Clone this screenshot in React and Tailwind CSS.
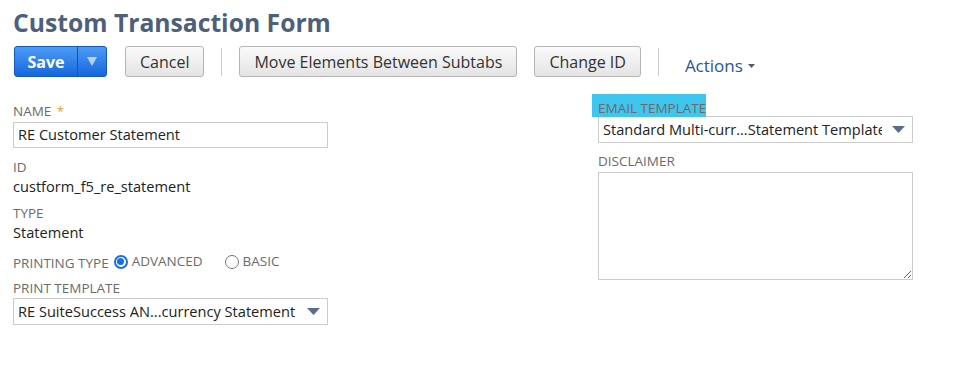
import React from "react";

const btn =
  "h-[31px] rounded-[3px] border border-[#b5b5b5] bg-gradient-to-b from-[#fafafa] to-[#e4e4e4] px-[14px] text-[16px] text-[#333333] leading-none";

const Label = ({ children }) => (
  <div className="text-[13.5px] leading-[18px] uppercase text-[#6b6b6b]">{children}</div>
);

const Triangle = ({ className }) => (
  <svg viewBox="0 0 13 7" className={className}>
    <path d="M0 0 L13 0 L6.5 7 Z" fill="#5b6d8a" />
  </svg>
);

const Select = ({ value }) => (
  <div className="flex h-[27px] w-[315px] items-center border border-[#cccccc] bg-white pl-[4px] pr-[7px]">
    <span className="flex-1 overflow-hidden whitespace-nowrap text-[14.6px] text-[#222222]">{value}</span>
    <Triangle className="ml-[10px] h-[7px] w-[13px] shrink-0" />
  </div>
);

const Radio = ({ checked, label }) => (
  <span className="flex items-center gap-[4px]">
    {checked ? (
      <span className="flex h-[14px] w-[14px] items-center justify-center rounded-full border-2 border-[#1a6fe0]">
        <span className="h-[7px] w-[7px] rounded-full bg-[#1a6fe0]" />
      </span>
    ) : (
      <span className="h-[14px] w-[14px] rounded-full border border-[#767676]" />
    )}
    <span className="text-[13.5px] uppercase text-[#6b6b6b]">{label}</span>
  </span>
);

export default function App() {
  return (
    <div
      className="h-[382px] w-[969px] overflow-hidden bg-white"
      style={{ fontFamily: '"Open Sans", "Liberation Sans", sans-serif' }}
    >
      <h1 className="pl-[13px] pt-[5px] text-[24.7px] font-bold leading-[36px] text-[#4d5f7a]">
        Custom Transaction Form
      </h1>

      <div className="mt-[5px] flex h-[31px] items-center pl-[14px]">
        <div className="flex h-[31px] overflow-hidden rounded-[3px] border border-[#1259b8] bg-gradient-to-b from-[#4c9bf5] to-[#1466dd]">
          <button className="w-[62px] text-[16px] font-bold text-white">Save</button>
          <span className="w-px bg-[#1254ae]" />
          <button className="flex w-[28px] items-center justify-center">
            <svg viewBox="0 0 10 9" className="h-[9px] w-[10px]">
              <path d="M0 0 L10 0 L5 9 Z" fill="#b9cff0" />
            </svg>
          </button>
        </div>
        <button className={`${btn} ml-[18px]`}>Cancel</button>
        <span className="mx-[17px] h-[28px] w-px bg-[#cccccc]" />
        <button className={btn}>Move Elements Between Subtabs</button>
        <button className={`${btn} ml-[17px]`}>Change ID</button>
        <span className="mx-[17px] h-[28px] w-px bg-[#cccccc]" />
        <button className="ml-[9px] flex h-[31px] items-end gap-[5px] text-[17px] leading-[23px] text-[#2a5396]">
          Actions
          <svg viewBox="0 0 7 4" className="mb-[9px] h-[4px] w-[7px]">
            <path d="M0 0 L7 0 L3.5 4 Z" fill="#4d5c73" />
          </svg>
        </button>
      </div>

      <div className="flex pl-[13px]">
        <div className="w-[315px]">
          <div className="mt-[25px]">
            <Label>
              Name <span className="ml-[2px] text-[#e3a033]">*</span>
            </Label>
          </div>
          <div className="mt-[2px] flex h-[26px] items-center border border-[#cccccc] px-[4px] text-[14.6px] text-[#222222]">
            RE Customer Statement
          </div>

          <div className="mt-[10px]">
            <Label>ID</Label>
          </div>
          <div className="text-[14.6px] leading-[20px] text-[#222222]">custform_f5_re_statement</div>

          <div className="mt-[8px]">
            <Label>Type</Label>
          </div>
          <div className="text-[14.6px] leading-[20px] text-[#222222]">Statement</div>

          <div className="mt-[8px] flex items-center gap-[5px]">
            <span className="pt-[3px] text-[13.5px] leading-[20px] uppercase text-[#6b6b6b]">Printing Type</span>
            <Radio checked label="Advanced" />
            <span className="w-[12px]" />
            <Radio label="Basic" />
          </div>

          <div className="mt-[6px]">
            <Label>Print Template</Label>
          </div>
          <div className="mt-[1px]">
            <Select value="RE SuiteSuccess AN...currency Statement" />
          </div>
        </div>

        <div className="ml-[270px] w-[315px]">
          <div className="relative z-10 mt-[22px]">
            <span className="absolute -left-[6px] -top-[5px] h-[23px] w-[114px] bg-[#3fc6ee]" />
            <div className="relative">
              <Label>Email Template</Label>
            </div>
          </div>
          <div className="-mt-[1px]">
            <Select value="Standard Multi-curr...Statement Template" />
          </div>

          <div className="mt-[9px]">
            <Label>Disclaimer</Label>
          </div>
          <textarea className="mt-[2px] block h-[108px] w-[315px] border border-[#cccccc] outline-none" />
        </div>
      </div>
    </div>
  );
}
